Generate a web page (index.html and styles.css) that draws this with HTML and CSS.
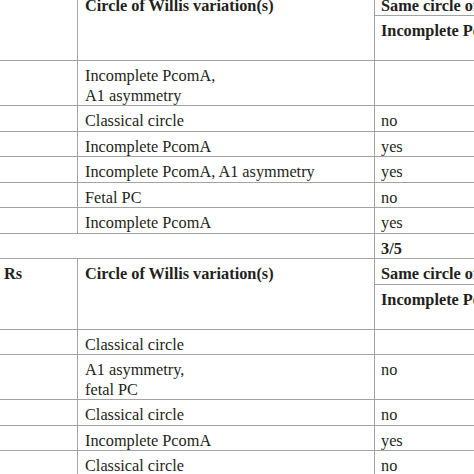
FILE: index.html
```html
<!DOCTYPE html>
<html>
<head>
<meta charset="utf-8">
<link rel="stylesheet" href="styles.css">
</head>
<body>
<div class="tbl">
  <div class="c c1 hd span2"></div>
  <div class="c c2 hd span2 b">Circle of Willis variation(s)</div>
  <div class="c c3 b">Same circle of Willis variation(s)</div>
  <div class="c c3 b tall">Incomplete PcomA</div>

  <div class="c c1"></div>
  <div class="c c2">Incomplete PcomA,<br>A1 asymmetry</div>
  <div class="c c3"></div>

  <div class="c c1"></div>
  <div class="c c2">Classical circle</div>
  <div class="c c3">no</div>

  <div class="c c1"></div>
  <div class="c c2">Incomplete PcomA</div>
  <div class="c c3">yes</div>

  <div class="c c1"></div>
  <div class="c c2">Incomplete PcomA, A1 asymmetry</div>
  <div class="c c3">yes</div>

  <div class="c c1"></div>
  <div class="c c2">Fetal PC</div>
  <div class="c c3">no</div>

  <div class="c c1"></div>
  <div class="c c2">Incomplete PcomA</div>
  <div class="c c3">yes</div>

  <div class="c c12"></div>
  <div class="c c3 b">3/5</div>

  <div class="c c1 hd span2 b">Rs</div>
  <div class="c c2 hd span2 b">Circle of Willis variation(s)</div>
  <div class="c c3 b">Same circle of Willis variation(s)</div>
  <div class="c c3 b tall">Incomplete PcomA</div>

  <div class="c c1"></div>
  <div class="c c2">Classical circle</div>
  <div class="c c3"></div>

  <div class="c c1"></div>
  <div class="c c2">A1 asymmetry,<br>fetal PC</div>
  <div class="c c3">no</div>

  <div class="c c1"></div>
  <div class="c c2">Classical circle</div>
  <div class="c c3">no</div>

  <div class="c c1"></div>
  <div class="c c2">Incomplete PcomA</div>
  <div class="c c3">yes</div>

  <div class="c c1"></div>
  <div class="c c2">Classical circle</div>
  <div class="c c3">no</div>
</div>
</body>
</html>
```
FILE: styles.css
```css
html, body {
  margin: 0;
  padding: 0;
  background: #ffffff;
  overflow: hidden;
  width: 474px;
  height: 474px;
}
.tbl {
  display: grid;
  grid-template-columns: 78px 297px 300px;
  margin-top: -9.5px;
  font-family: "Liberation Serif", "Times New Roman", serif;
  font-size: 16.3px;
  line-height: 19.5px;
  color: #231f20;
}
.c {
  box-sizing: border-box;
  padding: 5px 0 0 0;
  border-bottom: 1px solid #a3a3a3;
  white-space: nowrap;
  overflow: hidden;
}
.c1 {
  grid-column: 1;
  border-right: 1px solid #a3a3a3;
  padding-left: 4px;
}
.c2 {
  grid-column: 2;
  border-right: 1px solid #a3a3a3;
  padding-left: 7px;
}
.c12 {
  grid-column: 1 / span 2;
  border-right: 1px solid #a3a3a3;
}
.c3 {
  grid-column: 3;
  padding-left: 6px;
}
.span2 {
  grid-row: span 2;
}
.tall {
  min-height: 45px;
}
.b {
  font-weight: bold;
}
```
